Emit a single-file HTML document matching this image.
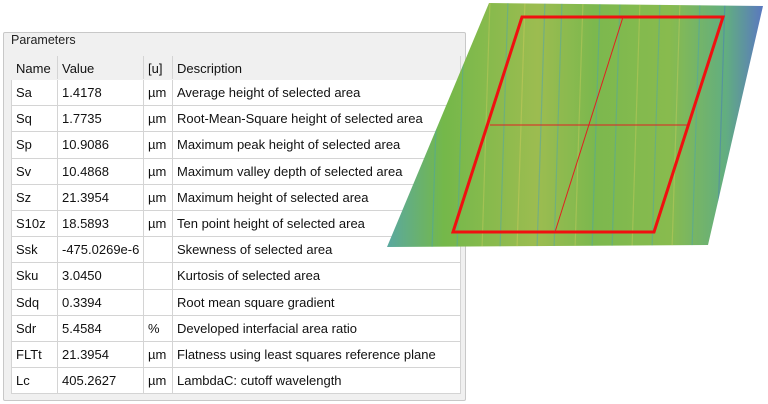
<!DOCTYPE html>
<html><head><style>
body{margin:0;width:768px;height:404px;background:#fff;position:relative;overflow:hidden;font-family:"Liberation Sans",sans-serif;}
.panel{position:absolute;left:3px;top:32px;width:461px;height:367px;background:#f0f0f0;border:1px solid #c8c8c8;border-radius:2px;}
.legend{position:absolute;left:9px;top:33px;font-size:12.5px;color:#222;background:#f0f0f0;padding:0 2px;line-height:14px;}
table{position:absolute;left:11px;top:56px;border-collapse:collapse;font-size:13px;color:#111;}
td{height:25.2px;border:1px solid #d4d4d4;background:#fff;padding:0 0 0 4px;white-space:nowrap;}
tr.h td{background:#f0f0f0;height:22px;border-color:#f0f0f0;border-right:1px solid #d4d4d4;}
</style></head><body>
<div class="panel"></div>
<div class="legend">Parameters</div>
<table>
<colgroup><col style="width:46px"><col style="width:86px"><col style="width:29px"><col style="width:288px"></colgroup>
<tr class="h"><td>Name</td><td>Value</td><td>[u]</td><td>Description</td></tr>
<tr><td>Sa</td><td>1.4178</td><td>µm</td><td>Average height of selected area</td></tr>
<tr><td>Sq</td><td>1.7735</td><td>µm</td><td>Root-Mean-Square height of selected area</td></tr>
<tr><td>Sp</td><td>10.9086</td><td>µm</td><td>Maximum peak height of selected area</td></tr>
<tr><td>Sv</td><td>10.4868</td><td>µm</td><td>Maximum valley depth of selected area</td></tr>
<tr><td>Sz</td><td>21.3954</td><td>µm</td><td>Maximum height of selected area</td></tr>
<tr><td>S10z</td><td>18.5893</td><td>µm</td><td>Ten point height of selected area</td></tr>
<tr><td>Ssk</td><td>-475.0269e-6</td><td></td><td>Skewness of selected area</td></tr>
<tr><td>Sku</td><td>3.0450</td><td></td><td>Kurtosis of selected area</td></tr>
<tr><td>Sdq</td><td>0.3394</td><td></td><td>Root mean square gradient</td></tr>
<tr><td>Sdr</td><td>5.4584</td><td>%</td><td>Developed interfacial area ratio</td></tr>
<tr><td>FLTt</td><td>21.3954</td><td>µm</td><td>Flatness using least squares reference plane</td></tr>
<tr><td>Lc</td><td>405.2627</td><td>µm</td><td>LambdaC: cutoff wavelength</td></tr>
</table>
<svg style="position:absolute;left:0;top:0" width="768" height="404">
<defs>
<linearGradient id="g" x1="0" x2="1" y1="0" y2="0">
<stop offset="0" stop-color="#5aa8a0"/>
<stop offset="0.15" stop-color="#74b84a"/>
<stop offset="0.4" stop-color="#9cbc50"/>
<stop offset="0.55" stop-color="#7cb84e"/>
<stop offset="0.75" stop-color="#88bb4e"/>
<stop offset="0.9" stop-color="#62ae80"/>
<stop offset="1" stop-color="#5a78c0"/>
</linearGradient>
<clipPath id="c"><polygon points="489,3 763,6 708,245 387,247"/></clipPath>
</defs>
<polygon points="489,3 763,6 708,245 387,247" fill="url(#g)"/>
<g clip-path="url(#c)" stroke-width="1.2" opacity="0.4">
<line x1="440" y1="0" x2="432" y2="250" stroke="#40a0c0"/>
<line x1="465" y1="0" x2="457" y2="250" stroke="#40a0c0"/>
<line x1="490" y1="0" x2="482" y2="250" stroke="#d0d060"/>
<line x1="508" y1="0" x2="500" y2="250" stroke="#40a0c0"/>
<line x1="525" y1="0" x2="517" y2="250" stroke="#d8d060"/>
<line x1="545" y1="0" x2="537" y2="250" stroke="#3c9cc8"/>
<line x1="562" y1="0" x2="554" y2="250" stroke="#40a0c0"/>
<line x1="583" y1="0" x2="575" y2="250" stroke="#d0d060"/>
<line x1="600" y1="0" x2="592" y2="250" stroke="#40a0c0"/>
<line x1="620" y1="0" x2="612" y2="250" stroke="#40a0c0"/>
<line x1="640" y1="0" x2="632" y2="250" stroke="#d0d060"/>
<line x1="660" y1="0" x2="652" y2="250" stroke="#40a0c0"/>
<line x1="680" y1="0" x2="672" y2="250" stroke="#d0d060"/>
<line x1="700" y1="0" x2="692" y2="250" stroke="#40a0c0"/>
<line x1="725" y1="0" x2="717" y2="250" stroke="#4070c8"/>
</g>
<polygon points="522,17 723,17 654,232 453,232" fill="none" stroke="#f01010" stroke-width="3"/>
<line x1="490" y1="125" x2="687" y2="125" stroke="#e02020" stroke-width="1"/>
<line x1="623" y1="17" x2="555" y2="232" stroke="#e02020" stroke-width="1"/>
</svg>
</body></html>
